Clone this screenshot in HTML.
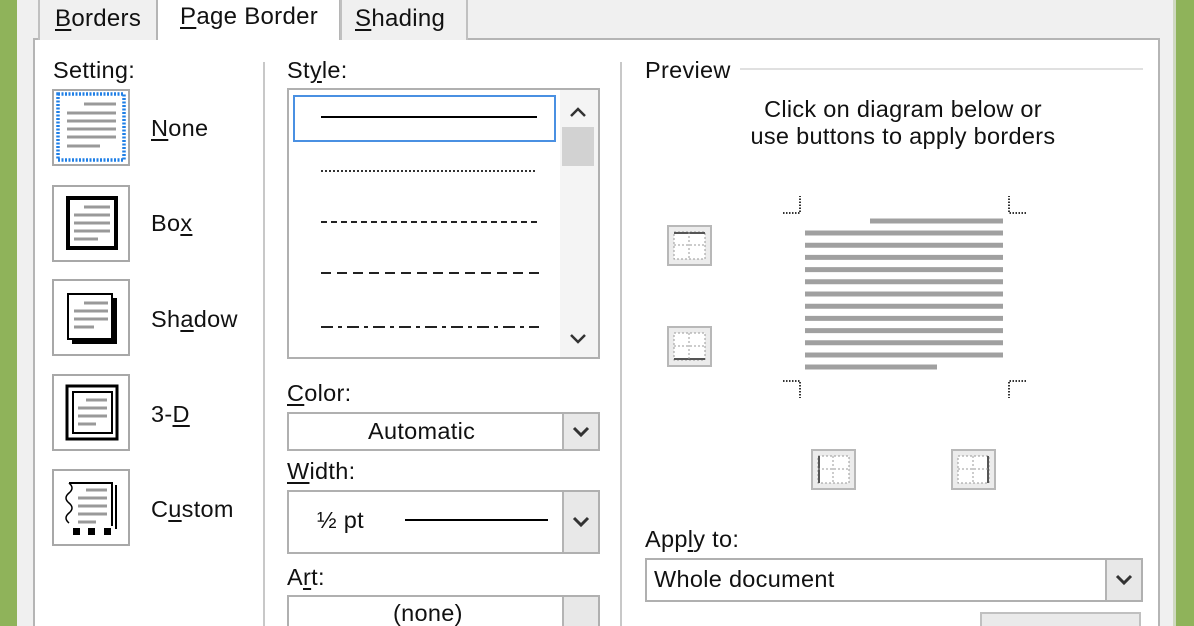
<!DOCTYPE html>
<html><head><meta charset="utf-8"><style>
*{margin:0;padding:0;box-sizing:border-box}
html,body{width:1194px;height:626px;overflow:hidden}
body{background:#f0f0f0;font-family:"Liberation Sans",sans-serif;color:#111;position:relative}
.a{position:absolute}
.t{font-size:23.5px;white-space:nowrap;letter-spacing:0.3px}
u{text-decoration:underline;text-underline-offset:3px}
.btn{position:absolute;width:78px;height:77px;border:2px solid #a8a8a8;background:#fff}
.combo{position:absolute;border:2px solid #b0b0b0;background:#fff}
.dd{position:absolute;right:0;top:0;bottom:0;width:36px;background:#e8e8e8;border-left:2px solid #b4b4b4}
.dd svg{position:absolute;left:50%;top:50%;transform:translate(-50%,-50%)}
.pb{position:absolute;width:45px;height:41px;border:2px solid #b8b8b8;background:#ececec}
</style></head><body>
<div class="a" style="left:0;top:0;width:17px;height:626px;background:#8fb35a"></div>
<div class="a" style="left:1176px;top:0;width:18px;height:626px;background:#8fb35a"></div>
<div class="a" style="left:1173px;top:0;width:3px;height:626px;background:#cfd9c0"></div>
<!-- panel -->
<div class="a" style="left:33px;top:38px;width:1127px;height:600px;background:#fff;border:2px solid #b5b5b5"></div>
<!-- tabs -->
<div class="a" style="left:38px;top:-2px;width:120px;height:42px;background:#f0f0f0;border:2px solid #c0c0c0;border-bottom:none"></div>
<div class="a t" style="left:55px;top:5px;font-size:24px"><u>B</u>orders</div>
<div class="a" style="left:156px;top:-4px;width:185px;height:44px;background:#fff;border:2px solid #b5b5b5;border-bottom:none"></div>
<div class="a t" style="left:180px;top:3px;font-size:24px"><u>P</u>age Border</div>
<div class="a" style="left:340px;top:-2px;width:128px;height:42px;background:#f0f0f0;border:2px solid #c0c0c0;border-bottom:none"></div>
<div class="a t" style="left:355px;top:5px;font-size:24px"><u>S</u>hading</div>
<!-- dividers -->
<div class="a" style="left:263px;top:62px;width:2px;height:570px;background:#c8c8c8"></div>
<div class="a" style="left:620px;top:62px;width:2px;height:570px;background:#c8c8c8"></div>
<!-- Setting -->
<div class="a t" style="left:53px;top:57px">Setting:</div>
<div class="btn" style="left:52px;top:89px"><svg width="74" height="73" style="position:absolute;left:0;top:0">
<rect x="4" y="3" width="66" height="66" fill="#fff" stroke="#1f7fe6" stroke-width="3.5" stroke-dasharray="2 1.5"/>
<g stroke="#999" stroke-width="3"><line x1="30" y1="13" x2="62" y2="13"/><line x1="13" y1="22" x2="62" y2="22"/><line x1="13" y1="30" x2="62" y2="30"/><line x1="13" y1="38" x2="62" y2="38"/><line x1="13" y1="46" x2="62" y2="46"/><line x1="13" y1="55" x2="46" y2="55"/></g></svg></div>
<div class="a t" style="left:151px;top:115px"><u>N</u>one</div>
<div class="btn" style="left:52px;top:185px"><svg width="74" height="73" style="position:absolute;left:0;top:0">
<rect x="14" y="11" width="48" height="50" fill="#fff" stroke="#000" stroke-width="4"/>
<g stroke="#999" stroke-width="3"><line x1="30" y1="20" x2="56" y2="20"/><line x1="20" y1="28" x2="56" y2="28"/><line x1="20" y1="36" x2="56" y2="36"/><line x1="20" y1="44" x2="56" y2="44"/><line x1="20" y1="52" x2="44" y2="52"/></g></svg></div>
<div class="a t" style="left:151px;top:210px">Bo<u>x</u></div>
<div class="btn" style="left:52px;top:279px"><svg width="74" height="73" style="position:absolute;left:0;top:0">
<rect x="18" y="17" width="45" height="46" fill="#000"/>
<rect x="14" y="13" width="44" height="45" fill="#fff" stroke="#000" stroke-width="2"/>
<g stroke="#999" stroke-width="3"><line x1="30" y1="22" x2="54" y2="22"/><line x1="20" y1="30" x2="54" y2="30"/><line x1="20" y1="38" x2="54" y2="38"/><line x1="20" y1="46" x2="40" y2="46"/></g></svg></div>
<div class="a t" style="left:151px;top:306px">Sh<u>a</u>dow</div>
<div class="btn" style="left:52px;top:374px"><svg width="74" height="73" style="position:absolute;left:0;top:0">
<rect x="13" y="10" width="50" height="53" fill="#fff" stroke="#000" stroke-width="3"/>
<rect x="19" y="16" width="39" height="41" fill="#fff" stroke="#000" stroke-width="2"/>
<g stroke="#999" stroke-width="3"><line x1="32" y1="24" x2="53" y2="24"/><line x1="24" y1="32" x2="53" y2="32"/><line x1="24" y1="40" x2="53" y2="40"/><line x1="24" y1="48" x2="42" y2="48"/></g></svg></div>
<div class="a t" style="left:151px;top:401px">3-<u>D</u></div>
<div class="btn" style="left:52px;top:469px"><svg width="74" height="73" style="position:absolute;left:0;top:0">
<path d="M15 12 H58 V55" fill="none" stroke="#000" stroke-width="2"/><path d="M62 14 V58" stroke="#000" stroke-width="2"/>
<path d="M15 12 q6 5 0 10 q-6 5 0 10 q6 5 0 10 q-6 5 0 10" fill="none" stroke="#000" stroke-width="1.5"/>
<g stroke="#999" stroke-width="3"><line x1="32" y1="19" x2="53" y2="19"/><line x1="24" y1="27" x2="53" y2="27"/><line x1="24" y1="35" x2="53" y2="35"/><line x1="24" y1="43" x2="53" y2="43"/><line x1="24" y1="51" x2="42" y2="51"/></g>
<rect x="19" y="57" width="7" height="7"/><rect x="34" y="57" width="7" height="7"/><rect x="50" y="57" width="7" height="7"/></svg></div>
<div class="a t" style="left:151px;top:496px">C<u>u</u>stom</div>
<!-- Style -->
<div class="a t" style="left:287px;top:57px">St<u>y</u>le:</div>
<div class="a" style="left:287px;top:88px;width:313px;height:271px;border:2px solid #b0b0b0;background:#fff"></div>
<div class="a" style="left:293px;top:95px;width:263px;height:47px;border:2px solid #4a90e2"></div>
<div class="a" style="left:321px;top:116px;width:216px;height:2px;background:#000"></div>
<div class="a" style="left:321px;top:170px;width:214px;border-top:2px dotted #333"></div>
<div class="a" style="left:321px;top:221px;width:216px;border-top:2px dashed #222"></div>
<svg class="a" style="left:321px;top:270px" width="218" height="60"><line x1="0" y1="3" x2="218" y2="3" stroke="#222" stroke-width="2" stroke-dasharray="10 6"/><line x1="0" y1="57" x2="218" y2="57" stroke="#222" stroke-width="2" stroke-dasharray="12 5 4 5"/></svg>
<div class="a" style="left:560px;top:90px;width:38px;height:267px;background:#f4f4f4"></div>
<div class="a" style="left:562px;top:127px;width:32px;height:39px;background:#d2d2d2"></div>
<svg class="a" style="left:569px;top:106px" width="18" height="12"><path d="M2 10 L9 3 L16 10" fill="none" stroke="#333" stroke-width="2.5"/></svg>
<svg class="a" style="left:569px;top:333px" width="18" height="12"><path d="M2 2 L9 9 L16 2" fill="none" stroke="#333" stroke-width="2.5"/></svg>
<!-- Color -->
<div class="a t" style="left:287px;top:380px"><u>C</u>olor:</div>
<div class="combo" style="left:287px;top:412px;width:313px;height:39px"><div class="dd"><svg width="18" height="12"><path d="M2 2 L9 9 L16 2" fill="none" stroke="#333" stroke-width="3"/></svg></div></div>
<div class="a t" style="left:368px;top:418px">Automatic</div>
<div class="a t" style="left:287px;top:458px"><u>W</u>idth:</div>
<div class="combo" style="left:287px;top:490px;width:313px;height:64px"><div class="dd"><svg width="18" height="12"><path d="M2 2 L9 9 L16 2" fill="none" stroke="#333" stroke-width="3"/></svg></div></div>
<div class="a t" style="left:317px;top:507px">½ pt</div>
<div class="a" style="left:405px;top:519px;width:143px;height:2px;background:#000"></div>
<div class="a t" style="left:287px;top:564px">A<u>r</u>t:</div>
<div class="combo" style="left:287px;top:595px;width:313px;height:50px"><div class="dd"></div></div>
<div class="a t" style="left:393px;top:600px">(none)</div>
<!-- Preview -->
<div class="a t" style="left:645px;top:57px">Preview</div>
<div class="a" style="left:740px;top:68px;width:403px;height:2px;background:#e0e0e0"></div>
<div class="a t" style="left:620px;top:96px;width:566px;text-align:center;line-height:27px">Click on diagram below or<br>use buttons to apply borders</div>
<svg class="a" style="left:780px;top:195px" width="250" height="205">
<g stroke="#a0a0a0" stroke-width="5">
<line x1="90" y1="26" x2="223" y2="26"/>
<line x1="25" y1="38" x2="223" y2="38"/><line x1="25" y1="50.2" x2="223" y2="50.2"/><line x1="25" y1="62.4" x2="223" y2="62.4"/><line x1="25" y1="74.6" x2="223" y2="74.6"/><line x1="25" y1="86.8" x2="223" y2="86.8"/><line x1="25" y1="99" x2="223" y2="99"/><line x1="25" y1="111.2" x2="223" y2="111.2"/><line x1="25" y1="123.4" x2="223" y2="123.4"/><line x1="25" y1="135.6" x2="223" y2="135.6"/><line x1="25" y1="147.8" x2="223" y2="147.8"/><line x1="25" y1="160" x2="223" y2="160"/>
<line x1="25" y1="172" x2="157" y2="172"/>
</g>
<g stroke="#333" stroke-width="2" stroke-dasharray="1.5 1.5" fill="none">
<path d="M3 18 H20 V1"/><path d="M246 18 H229 V1"/><path d="M3 186 H20 V203"/><path d="M246 186 H229 V203"/></g></svg>
<div class="pb" style="left:667px;top:225px"><svg width="41" height="37"><rect x="5" y="5" width="31" height="27" fill="#fff" stroke="#999" stroke-dasharray="2 2"/><line x1="5" y1="6" x2="36" y2="6" stroke="#555" stroke-width="2"/><line x1="20" y1="5" x2="20" y2="32" stroke="#999" stroke-dasharray="2 2"/><line x1="5" y1="18" x2="36" y2="18" stroke="#999" stroke-dasharray="2 2"/></svg></div>
<div class="pb" style="left:667px;top:326px"><svg width="41" height="37"><rect x="5" y="5" width="31" height="27" fill="#fff" stroke="#999" stroke-dasharray="2 2"/><line x1="5" y1="31" x2="36" y2="31" stroke="#555" stroke-width="2"/><line x1="20" y1="5" x2="20" y2="32" stroke="#999" stroke-dasharray="2 2"/><line x1="5" y1="18" x2="36" y2="18" stroke="#999" stroke-dasharray="2 2"/></svg></div>
<div class="pb" style="left:811px;top:449px"><svg width="41" height="37"><rect x="5" y="5" width="31" height="27" fill="#fff" stroke="#999" stroke-dasharray="2 2"/><line x1="6" y1="5" x2="6" y2="32" stroke="#555" stroke-width="2"/><line x1="20" y1="5" x2="20" y2="32" stroke="#999" stroke-dasharray="2 2"/><line x1="5" y1="18" x2="36" y2="18" stroke="#999" stroke-dasharray="2 2"/></svg></div>
<div class="pb" style="left:951px;top:449px"><svg width="41" height="37"><rect x="5" y="5" width="31" height="27" fill="#fff" stroke="#999" stroke-dasharray="2 2"/><line x1="35" y1="5" x2="35" y2="32" stroke="#555" stroke-width="2"/><line x1="20" y1="5" x2="20" y2="32" stroke="#999" stroke-dasharray="2 2"/><line x1="5" y1="18" x2="36" y2="18" stroke="#999" stroke-dasharray="2 2"/></svg></div>
<div class="a t" style="left:645px;top:526px">App<u>l</u>y to:</div>
<div class="combo" style="left:645px;top:558px;width:498px;height:44px"><div class="dd"><svg width="18" height="12"><path d="M2 2 L9 9 L16 2" fill="none" stroke="#333" stroke-width="3"/></svg></div></div>
<div class="a t" style="left:654px;top:566px">Whole document</div>
<div class="a" style="left:980px;top:612px;width:161px;height:30px;border:2px solid #c0c0c0;background:#eaeaea"></div>
</body></html>
